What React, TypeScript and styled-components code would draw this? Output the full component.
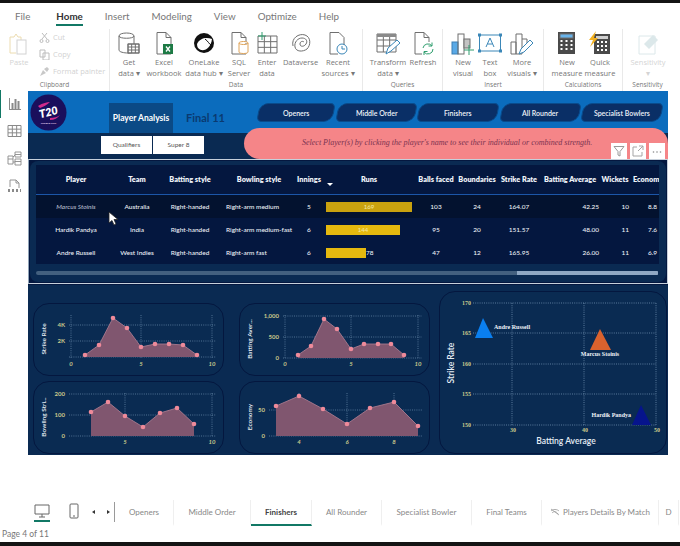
import { ReactNode } from "react";
import styled, { createGlobalStyle } from "styled-components";

// STYLE
const GlobalStyle = createGlobalStyle`
  html, body {
    margin: 0;
    padding: 0;
    background: #fff;
  }
  * {
    box-sizing: border-box;
  }
`;

const Page = styled.div`
  position: relative;
  display: flex;
  flex-direction: column;
  width: 680px;
  height: 546px;
  overflow: hidden;
  background: #fff;
  font-family: "Open Sans", "Liberation Sans", sans-serif;
`;

const BlackBar = styled.div<{ $h: number }>`
  flex: none;
  height: ${(p) => p.$h}px;
  background: #141414;
`;

const Ribbon = styled.div`
  flex: none;
  height: 87px;
  display: flex;
  flex-direction: column;
`;

const MenuBar = styled.div`
  flex: none;
  height: 25px;
  display: flex;
  align-items: center;
  padding-left: 15px;
  gap: 22px;
  font-family: "Lato", sans-serif;
  font-size: 9.8px;
`;

const MenuItem = styled.div<{ $active?: boolean }>`
  height: 22px;
  line-height: 24px;
  margin-top: -1px;
  color: ${(p) => (p.$active ? "#333" : "#777")};
  font-weight: ${(p) => (p.$active ? 700 : 400)};
  border-bottom: 2px solid ${(p) => (p.$active ? "#117865" : "transparent")};
  margin-left: ${(p) => (p.$active ? 4 : 0)}px;
`;

const Groups = styled.div`
  flex: 1;
  display: flex;
  padding-top: 1px;
`;

const Group = styled.div<{ $w: number; $last?: boolean }>`
  flex: none;
  width: ${(p) => p.$w}px;
  display: flex;
  flex-direction: column;
  border-right: 1px solid ${(p) => (p.$last ? "transparent" : "#e9e9e9")};
  margin-bottom: 1px;
`;

const GroupBody = styled.div<{ $pad?: number }>`
  flex: 1;
  display: flex;
  padding-left: ${(p) => p.$pad ?? 0}px;
`;

const GroupLabel = styled.div`
  flex: none;
  height: 12px;
  line-height: 12px;
  text-align: center;
  font-size: 6.5px;
  color: #777;
`;

const RibbonBtn = styled.div<{ $w: number; $off?: boolean }>`
  flex: none;
  width: ${(p) => p.$w}px;
  display: flex;
  flex-direction: column;
  align-items: center;
  font-size: 7.5px;
  line-height: 11px;
  white-space: nowrap;
  color: ${(p) => (p.$off ? "#d4d4d4" : "#777")};
`;

const IconSlot = styled.div`
  flex: none;
  height: 27px;
  margin-bottom: 1px;
  display: flex;
  align-items: center;
  justify-content: center;
`;

const ClipList = styled.div`
  display: flex;
  flex-direction: column;
  gap: 3px;
  padding: 1px 0 0 4px;
`;

const ClipRow = styled.div`
  display: flex;
  align-items: center;
  gap: 3px;
  height: 14px;
  font-size: 7.5px;
  color: #d2d2d2;
  white-space: nowrap;
`;

const Workspace = styled.div`
  flex: none;
  height: 410px;
  display: flex;
  padding-top: 1px;
`;

const Rail = styled.div`
  flex: none;
  width: 28px;
  display: flex;
  flex-direction: column;
  align-items: center;
  margin-top: -1px;
`;

const RailItem = styled.div<{ $active?: boolean }>`
  position: relative;
  width: 100%;
  height: 27.5px;
  display: flex;
  align-items: center;
  justify-content: center;
  border-left: 1px solid ${(p) => (p.$active ? "#117865" : "transparent")};
`;

const Canvas = styled.div`
  position: relative;
  flex: none;
  width: 640px;
  height: 364px;
  display: flex;
  flex-direction: column;
  background: #0a2a52;
`;

const Header = styled.div`
  flex: none;
  height: 42px;
  display: flex;
  background: #0b6cbd;
`;

const LogoBox = styled.div`
  flex: none;
  width: 81px;
  padding: 3px 0 0 2px;
`;

const PageTab = styled.div`
  flex: none;
  align-self: flex-end;
  width: 64px;
  height: 30px;
  background: #0b4a86;
  color: #fff;
  font-family: "Lato", sans-serif;
  font-size: 8.5px;
  font-weight: 700;
  text-align: center;
  line-height: 31px;
  white-space: nowrap;
`;

const FinalTab = styled.div`
  flex: none;
  width: 85px;
  padding: 20px 0 0 13px;
  color: #0a3a70;
  font-family: "Lato", sans-serif;
  font-size: 11px;
  font-weight: 700;
  white-space: nowrap;
`;

const NavRow = styled.div`
  flex: 1;
  display: flex;
  gap: 2.5px;
  padding: 12px 0 0 0;
  height: 31px;
`;

const NavButton = styled.div<{ $w: number }>`
  flex: none;
  width: ${(p) => p.$w}px;
  height: 19px;
  background: #0a2f66;
  border: 1px solid #0a4b8b;
  border-radius: 9px 5px 9px 5px;
  transform: skewX(-10deg);
  display: flex;
  align-items: center;
  justify-content: center;
  color: #eef3f8;
  font-family: "Lato", sans-serif;
  font-size: 7px;
  font-weight: 600;
  white-space: nowrap;

  span {
    transform: skewX(10deg);
  }
`;

const SubBar = styled.div`
  flex: none;
  height: 26px;
  display: flex;
  gap: 1px;
  padding: 3px 0 0 73px;
  background: #0a2a52;
`;

const Slicer = styled.div`
  flex: none;
  width: 51px;
  height: 18px;
  background: #fff;
  color: #555;
  font-family: "Lato", sans-serif;
  font-size: 6.5px;
  text-align: center;
  line-height: 18px;
`;

const Banner = styled.div`
  position: absolute;
  left: 216px;
  top: 37px;
  width: 424px;
  height: 31px;
  padding: 0 40px 2px 58px;
  display: flex;
  align-items: center;
  background: #f58588;
  border-radius: 16px 16px 0 16px;
  color: #7a3350;
  font-family: "Liberation Serif", serif;
  font-style: italic;
  font-size: 8px;
  white-space: nowrap;
`;

const VisualTools = styled.div`
  position: absolute;
  left: 583px;
  top: 52px;
  display: flex;
  gap: 3px;
  z-index: 2;
`;

const ToolButton = styled.div`
  width: 16px;
  height: 16px;
  background: #fff;
  display: flex;
  align-items: center;
  justify-content: center;
`;

const TablePanel = styled.div`
  flex: none;
  height: 125px;
  border: 1px solid #c6d0db;
  border-left-color: #8fa3b8;
  padding: 1px;
  background: #04173f;
`;

const TableCard = styled.div`
  height: 100%;
  background: #0a2a52;
  border-radius: 8px;
  padding: 4px 7px 0 6px;
  display: flex;
  flex-direction: column;
`;

const Table = styled.div`
  flex: none;
  height: 99px;
  background: #04173f;
  font-family: "Lato", "Open Sans", sans-serif;
  overflow: hidden;
`;

const Row = styled.div<{ $head?: boolean; $dim?: boolean }>`
  display: grid;
  grid-template-columns: 80px 42px 64px 74px 26px 94px 40px 42px 42px 60px 30px 28px;
  align-items: center;
  height: ${(p) => (p.$head ? 30 : 23)}px;
  color: #eef2f8;
  font-size: ${(p) => (p.$head ? 7.3 : 6.5)}px;
  font-weight: ${(p) => (p.$head ? 800 : 500)};
  border-bottom: ${(p) => (p.$head ? "1px solid #1c56a8" : "none")};
  background: ${(p) => (p.$dim ? "#03122f" : "transparent")};
`;

const Cell = styled.div<{ $align?: string; $pad?: number; $dim?: boolean }>`
  position: relative;
  text-align: ${(p) => p.$align ?? "center"};
  padding-left: ${(p) => p.$pad ?? 0}px;
  white-space: nowrap;
  font-style: ${(p) => (p.$dim ? "italic" : "normal")};
  color: ${(p) => (p.$dim ? "#b4bccb" : "inherit")};
`;

const NumCell = styled(Cell)`
  padding-right: 1px;
  text-align: right;
`;

const SortCaret = styled.div`
  position: absolute;
  left: 5px;
  top: 8px;
  width: 0;
  height: 0;
  border-left: 3px solid transparent;
  border-right: 3px solid transparent;
  border-top: 3px solid #fff;
`;

const RunBar = styled.div<{ $color: string }>`
  height: 10px;
  margin-left: 4px;
  display: flex;
  align-items: center;
  justify-content: center;
  background: ${(p) => p.$color};
  color: #f3e7a0;
  font-size: 6px;
`;

const RunOutside = styled.span`
  position: absolute;
  left: 44px;
  top: 0;
  line-height: 9px;
`;

const ScrollTrack = styled.div`
  flex: none;
  margin-top: 7px;
  height: 4px;
  display: flex;
  border-radius: 2px;
  overflow: hidden;
`;

const ScrollPart = styled.div<{ $w: number; $color: string }>`
  flex: none;
  width: ${(p) => p.$w}px;
  background: ${(p) => p.$color};
`;

const ChartsArea = styled.div`
  flex: 1;
  display: flex;
  gap: 9px;
  padding: 6px 1px 2px 5px;
  border-top: 1px solid #04173f;
`;

const SmallCharts = styled.div`
  flex: none;
  align-self: flex-end;
  display: grid;
  grid-template-columns: 191px 191px;
  grid-template-rows: 73px 73px;
  column-gap: 15px;
  row-gap: 5px;
`;

const ChartCard = styled.div`
  border: 1.5px solid #04173f;
  border-radius: 16px;
  background: #0a2b52;
  overflow: hidden;

  svg {
    display: block;
    margin: -1.5px;
  }
`;

const BigCard = styled(ChartCard)`
  flex: none;
  width: 228px;
  height: 163px;
`;

const PageTabs = styled.div`
  flex: none;
  height: 27px;
  display: flex;
  align-items: stretch;
`;

const ViewTools = styled.div`
  flex: none;
  width: 115px;
  display: flex;
  align-items: center;
  border-right: 1px solid #9a9a9a;
  margin: 2px 0 5px;
  padding-left: 34px;
`;

const ViewTool = styled.div<{ $active?: boolean; $w: number; $gap: number }>`
  flex: none;
  width: ${(p) => p.$w}px;
  margin-right: ${(p) => p.$gap}px;
  height: 20px;
  display: flex;
  align-items: center;
  justify-content: center;
  border-bottom: 2px solid ${(p) => (p.$active ? "#117865" : "transparent")};
`;

const Pager = styled.div`
  flex: none;
  width: 18px;
  display: flex;
  justify-content: space-between;
`;

const Triangle = styled.div<{ $left?: boolean }>`
  width: 0;
  height: 0;
  border-top: 2.5px solid transparent;
  border-bottom: 2.5px solid transparent;
  ${(p) => (p.$left ? "border-right: 3px solid #333;" : "border-left: 3px solid #333;")}
`;

const PageTabItem = styled.div<{ $w: number; $active?: boolean }>`
  flex: none;
  width: ${(p) => p.$w}px;
  display: flex;
  align-items: center;
  justify-content: center;
  gap: 3px;
  font-family: "Lato", sans-serif;
  font-size: 8px;
  white-space: nowrap;
  overflow: hidden;
  color: ${(p) => (p.$active ? "#444" : "#888")};
  font-weight: ${(p) => (p.$active ? 700 : 400)};
  border-right: 1px solid #efefef;
  border-bottom: 2px solid ${(p) => (p.$active ? "#117865" : "transparent")};
  margin-bottom: 1px;
`;

const StatusBar = styled.div`
  flex: none;
  height: 15px;
  padding-left: 2px;
  font-family: "Lato", sans-serif;
  font-size: 8.5px;
  line-height: 15px;
  color: #777;
`;

const Cursor = styled.svg`
  position: absolute;
  left: 80px;
  top: 120px;
  z-index: 3;
`;

// ICONS
const Svg = ({ children, w = 24, h = 24 }: { children: ReactNode; w?: number; h?: number }) => (
  <svg width={w} height={h} viewBox={`0 0 ${w} ${h}`} fill="none" stroke="#6f6f6f" strokeWidth="1">
    {children}
  </svg>
);

const doc = "M5 1.5h9l5 5V23H5z M14 1.5v5h5";

const GridLines = ({ x, y, w, h, cols = 3, rows = 3 }: { x: number; y: number; w: number; h: number; cols?: number; rows?: number }) => {
  const lines: string[] = [];
  for (let i = 0; i <= cols; i++) lines.push(`M${x + (w * i) / cols} ${y}v${h}`);
  for (let i = 0; i <= rows; i++) lines.push(`M${x} ${y + (h * i) / rows}h${w}`);
  return <path d={lines.join(" ")} />;
};

const PasteIcon = () => (
  <Svg>
    <path d="M3 6h4l2-3 2 3h3v3M3 6v16h6" stroke="#ecdcb0" />
    <rect x="10" y="9" width="9" height="14" stroke="#d2d2d2" />
  </Svg>
);
const GetDataIcon = () => (
  <Svg>
    <path d="M2 5c0-4 15-4 15 0v15c0 1-2 2-6 2s-9-1-9-3z M2 5c0 3 15 3 15 0" />
    <rect x="11" y="13" width="11" height="9" fill="#fff" />
    <GridLines x={11} y={13} w={11} h={9} />
  </Svg>
);
const ExcelIcon = () => (
  <Svg>
    <path d={doc} />
    <rect x="11" y="13" width="10" height="10" fill="#1d7a45" stroke="none" />
    <path d="M14 15.5l4 5M18 15.5l-4 5" stroke="#fff" strokeWidth="1.3" />
  </Svg>
);
const OneLakeIcon = () => (
  <Svg>
    <circle cx="12" cy="12" r="10" fill="#111" stroke="none" />
    <path d="M5 13c3-6 9-7 15-5-1 8-6 12-11 11-3-1-4-3-4-6z" fill="#fff" stroke="none" />
    <path d="M13 8c3 2 4 5 6 6" stroke="#111" />
  </Svg>
);
const SqlIcon = () => (
  <Svg>
    <path d={doc} />
    <path d="M12 12c0-2 9-2 9 0v9c0 2-9 2-9 0z M12 12c0 2 9 2 9 0" stroke="#e0a458" fill="#fff" />
  </Svg>
);
const EnterDataIcon = () => (
  <Svg>
    <GridLines x={3} y={5} w={19} h={17} cols={3} rows={3} />
    <path d="M7 1v8M3 5h8" stroke="#2f9e6e" />
  </Svg>
);
const DataverseIcon = () => (
  <Svg>
    <path d="M4 15C2 7 10 2 16 4c6 2 6 10 2 14-4 3-11 3-12-2-1-5 3-9 7-9s6 3 4 6-6 3-6 0 3-3 4-2" />
  </Svg>
);
const RecentIcon = () => (
  <Svg>
    <path d="M4 1.5h9l5 5V14M4 1.5V23h8" />
    <circle cx="16" cy="18" r="5" stroke="#3b87b8" />
    <path d="M16 15v3h3" stroke="#3b87b8" />
  </Svg>
);
const TransformIcon = () => (
  <Svg>
    <GridLines x={1} y={3} w={19} h={18} cols={3} rows={3} />
    <path d="M1 3h19v3H1z" fill="#8a8a8a" stroke="none" />
    <path d="M10 23l2-6 9-8 3 3-9 8z" fill="#fff" stroke="#3b87b8" />
  </Svg>
);
const RefreshIcon = () => (
  <Svg>
    <path d="M4 1.5h9l5 5V11M4 1.5V23h7M13 1.5v5h5" />
    <path d="M12 17a5 5 0 0 1 9-2M22 18a5 5 0 0 1-9 3" stroke="#2f9e6e" />
    <path d="M21 11.5V15h-3.5M13 24v-3.5h3.5" stroke="#2f9e6e" />
  </Svg>
);
const NewVisualIcon = () => (
  <Svg>
    <rect x="1" y="11" width="6" height="12" fill="#59a9e6" stroke="#3a7fb5" />
    <rect x="7" y="3" width="6" height="20" />
    <rect x="13" y="8" width="6" height="9" fill="#c4c4c4" />
    <path d="M18 14v10M13 19h10" stroke="#2f9e6e" />
  </Svg>
);
const TextBoxIcon = () => (
  <Svg>
    <rect x="1.5" y="4" width="21" height="16" stroke="#3b87b8" />
    <path d="M8 16l4-9 4 9M9.5 13h5" stroke="#3b87b8" />
    <path d="M0 2.5h3v3H0zM21 2.5h3v3h-3zM0 18.5h3v3H0zM21 18.5h3v3h-3z" fill="#3b87b8" stroke="none" />
  </Svg>
);
const MoreVisualsIcon = () => (
  <Svg>
    <path d="M1 11h5v12H1zM6 3h6v20H6zM12 8h5v6" />
    <path d="M9 23l2-5 9-9 3 3-9 9z" fill="#fff" stroke="#3b87b8" />
  </Svg>
);
const MeasureIcon = () => (
  <Svg>
    <rect x="3" y="1" width="17" height="22" fill="#4a4a4a" stroke="none" />
    <rect x="5" y="3" width="13" height="4" fill="#68b3ea" />
    <path d="M5.5 10h2M10.5 10h2M15.5 10h2M5.5 14h2M10.5 14h2M15.5 14h2M5.5 18h2M10.5 18h2M15.5 18h2" stroke="#fff" strokeWidth="2" />
  </Svg>
);
const QuickMeasureIcon = () => (
  <Svg>
    <rect x="6" y="3" width="16" height="20" fill="#4a4a4a" stroke="none" />
    <rect x="8" y="5" width="12" height="3" fill="#cfcfcf" stroke="none" />
    <path d="M9 11h2M13 11h2M17 11h2M9 15h2M13 15h2M17 15h2M9 19h2M13 19h2M17 19h2" stroke="#fff" strokeWidth="2" />
    <path d="M8 0L1 9h4l-3 7 8-9H6z" fill="#f2b01e" stroke="none" />
  </Svg>
);
const SensitivityIcon = () => (
  <Svg>
    <path d="M3 5h16v18H3z" stroke="#dce8ea" />
    <path d="M8 13l9-9 5 5-9 9z" fill="#dce8ea" stroke="none" />
  </Svg>
);

const ReportIcon = () => (
  <svg width="14" height="14" viewBox="0 0 14 14" fill="#8a8a8a" stroke="none">
    <path d="M1 1h1v12H1zM1 12h12v1H1zM3.5 6h2v6h-2zM6.5 2h2v10h-2zM9.5 4h2v8h-2z" />
  </svg>
);
const DataIcon = () => (
  <svg width="15" height="14" viewBox="0 0 15 14" fill="none" stroke="#8a8a8a">
    <GridLines x={1} y={1.5} w={13} h={11} cols={3} rows={3} />
  </svg>
);
const ModelIcon = () => (
  <svg width="15" height="15" viewBox="0 0 15 15" fill="none" stroke="#8a8a8a" strokeWidth="0.9">
    <path d="M1 5h5v8H1zM8 1h6v5H8zM8 8h6v6H8zM1 8h5M8 3.5h6M8 10.5h6M6 6l2-2M6 11h2" />
  </svg>
);
const DaxIcon = () => (
  <svg width="15" height="15" viewBox="0 0 15 15" fill="none" stroke="#8a8a8a" strokeWidth="0.9">
    <path d="M3 8V1h6l3 3v5M9 1v3h3" />
    <path d="M1 10h2v3H1zM5 10h2v3H5zM9 10h2v3H9zM13 10h1v3h-1z" fill="#8a8a8a" stroke="none" />
  </svg>
);

// CHARTS
const TICK = "#c9c98c";
const GRID = "#6f8fb0";
const TXT = "Lato, sans-serif";

type AreaProps = {
  title: string;
  titleY?: number;
  pts: number[][];
  base: number;
  gridL: number;
  gridR: number;
  hLines: number[];
  vLines: number[];
  yTicks: { y: number; label: string }[];
  xTicks: { x: number; label: string }[];
};

function AreaChart(props: AreaProps) {
  const { title, pts, base, gridL, gridR, hLines, vLines, yTicks, xTicks } = props;
  const line = pts.map((p) => p.join(",")).join(" ");
  const area = `${pts[0][0]},${base} ${line} ${pts[pts.length - 1][0]},${base}`;
  return (
    <svg width="191" height="73" viewBox="0 0 191 73">
      {hLines.map((y) => (
        <line key={y} x1={gridL} x2={gridR} y1={y} y2={y} stroke={GRID} strokeWidth="0.7" strokeDasharray="1 1.2" />
      ))}
      {vLines.map((x) => (
        <line key={x} x1={x} x2={x} y1={12} y2={base + 1} stroke={GRID} strokeWidth="0.7" strokeDasharray="1 1.2" />
      ))}
      <polygon points={area} fill="#80566f" />
      <polyline points={line} fill="none" stroke="#a8798d" strokeWidth="0.9" />
      {pts.map((p, i) => (
        <circle key={i} cx={p[0]} cy={p[1]} r="2.3" fill="#ee8a9a" />
      ))}
      {yTicks.map((t) => (
        <text key={t.label} x={gridL - 4} y={t.y + 2} textAnchor="end" fontSize="6" fontWeight="700" fontFamily={TXT} fill={TICK}>
          {t.label}
        </text>
      ))}
      {xTicks.map((t) => (
        <text key={t.label} x={t.x} y={63} textAnchor="middle" fontSize="6" fontWeight="700" fontStyle="italic" fontFamily={TXT} fill={TICK}>
          {t.label}
        </text>
      ))}
      <text transform={`translate(13 ${props.titleY ?? 36}) rotate(-90)`} textAnchor="middle" fontSize="6.5" fontWeight="600" fontFamily={TXT} fill="#eef2f8">
        {title}
      </text>
    </svg>
  );
}

function ScatterChart() {
  const hs = [12, 42, 73, 103, 134];
  const vs = [73, 145, 217];
  const serif = "'Liberation Serif', serif";
  return (
    <svg width="228" height="163" viewBox="0 0 228 163">
      {hs.map((y) => (
        <line key={y} x1={34} x2={217} y1={y} y2={y} stroke={GRID} strokeWidth="0.8" strokeDasharray="1 1.2" />
      ))}
      {vs.map((x) => (
        <line key={x} x1={x} x2={x} y1={12} y2={134} stroke={GRID} strokeWidth="0.8" strokeDasharray="1 1.2" />
      ))}
      {["170", "165", "160", "155", "150"].map((l, i) => (
        <text key={l} x={32} y={hs[i] + 2} textAnchor="end" fontSize="6" fontWeight="700" fontFamily={serif} fill={TICK}>
          {l}
        </text>
      ))}
      {["30", "40", "50"].map((l, i) => (
        <text key={l} x={vs[i] + 1} y={141} textAnchor="middle" fontSize="6" fontWeight="700" fontFamily={serif} fill={TICK}>
          {l}
        </text>
      ))}
      <polygon points="44,27 36,47 54,47" fill="#0a7ff0" />
      <polygon points="161,38 151,59 172,59" fill="#d9622e" />
      <polygon points="202,114 193,134 212,134" fill="#06148c" />
      <text x={55} y={38} fontSize="6" fontWeight="700" fontFamily={serif} fill="#eef2f8">Andre Russell</text>
      <text x={161} y={65} textAnchor="middle" fontSize="6" fontWeight="700" fontFamily={serif} fill="#eef2f8">Marcus Stoinis</text>
      <text x={192} y={126} textAnchor="end" fontSize="6" fontWeight="700" fontFamily={serif} fill="#eef2f8">Hardik Pandya</text>
      <text x={127} y={153} textAnchor="middle" fontSize="8.5" fontWeight="600" fontFamily={TXT} fill="#e6edf5">Batting Average</text>
      <text transform="translate(15 72) rotate(-90)" textAnchor="middle" fontSize="8.5" fontWeight="600" fontFamily={TXT} fill="#e6edf5">Strike Rate</text>
    </svg>
  );
}

const LogoMark = () => (
  <svg width="37" height="37" viewBox="0 0 37 37">
    <circle cx="18.5" cy="18.5" r="18" fill="#1a0f5c" />
    <path d="M8 12c5-3 9-4 12-4-3 3-7 5-10 6z" fill="#d22a8c" />
    <path d="M20 24c4 0 8-1 10-3-2 3-6 5-10 5z" fill="#d22a8c" />
    <text transform="rotate(-14 18.5 18.5)" x="18.5" y="22" textAnchor="middle" fontSize="11" fontWeight="800" fontStyle="italic" fontFamily="Lato, sans-serif" fill="#fff">
      T20
    </text>
    <text x="18.5" y="29.5" textAnchor="middle" fontSize="2.6" fontWeight="700" fontFamily="Lato, sans-serif" fill="#e9d7ef">
      WORLD CUP
    </text>
  </svg>
);

// DATA
const dataButtons: { w: number; icon: ReactNode; a: string; b: string }[] = [
  { w: 36, icon: <GetDataIcon />, a: "Get", b: "data ▾" },
  { w: 34, icon: <ExcelIcon />, a: "Excel", b: "workbook" },
  { w: 46, icon: <OneLakeIcon />, a: "OneLake", b: "data hub ▾" },
  { w: 24, icon: <SqlIcon />, a: "SQL", b: "Server" },
  { w: 32, icon: <EnterDataIcon />, a: "Enter", b: "data" },
  { w: 35, icon: <DataverseIcon />, a: "Dataverse", b: "" },
  { w: 40, icon: <RecentIcon />, a: "Recent", b: "sources ▾" },
];

const players = [
  { name: "Marcus Stoinis", team: "Australia", bowl: "Right-arm medium", inn: "5", runs: "169", bar: 86, color: "#c9a20f", balls: "103", bnd: "24", sr: "164.07", avg: "42.25", w: "10", eco: "8.8" },
  { name: "Hardik Pandya", team: "India", bowl: "Right-arm medium-fast", inn: "6", runs: "144", bar: 74, color: "#e5b90f", balls: "95", bnd: "20", sr: "151.57", avg: "48.00", w: "11", eco: "7.6" },
  { name: "Andre Russell", team: "West Indies", bowl: "Right-arm fast", inn: "6", runs: "78", bar: 40, color: "#e5b90f", balls: "47", bnd: "12", sr: "165.95", avg: "26.00", w: "11", eco: "6.9" },
];

const navs = [
  { label: "Openers", w: 76 },
  { label: "Middle Order", w: 79 },
  { label: "Finishers", w: 80 },
  { label: "All Rounder", w: 79 },
  { label: "Specialist Bowlers", w: 80 },
];

const tabs = [
  { label: "Openers", w: 59 },
  { label: "Middle Order", w: 77 },
  { label: "Finishers", w: 61, active: true },
  { label: "All Rounder", w: 70 },
  { label: "Specialist Bowler", w: 90 },
  { label: "Final Teams", w: 70 },
];

function App() {
  return (
    <Page>
      <GlobalStyle />
      <BlackBar $h={3} />
      <Ribbon>
        <MenuBar>
          <MenuItem>File</MenuItem>
          <MenuItem $active>Home</MenuItem>
          <MenuItem>Insert</MenuItem>
          <MenuItem>Modeling</MenuItem>
          <MenuItem>View</MenuItem>
          <MenuItem>Optimize</MenuItem>
          <MenuItem>Help</MenuItem>
        </MenuBar>
        <Groups>
          <Group $w={110}>
            <GroupBody $pad={3}>
              <RibbonBtn $w={32} $off>
                <IconSlot><PasteIcon /></IconSlot>
                Paste
              </RibbonBtn>
              <ClipList>
                <ClipRow>
                  <svg width="11" height="11" viewBox="0 0 11 11" fill="none" stroke="#bdbdbd"><path d="M3 1l5 6M8 1L3 7" /><circle cx="2.5" cy="9" r="1.5" /><circle cx="8.5" cy="9" r="1.5" /></svg>
                  Cut
                </ClipRow>
                <ClipRow>
                  <svg width="11" height="11" viewBox="0 0 11 11" fill="none" stroke="#bdbdbd"><path d="M1 1h5v7H1zM4 4h6v7H4z" /></svg>
                  Copy
                </ClipRow>
                <ClipRow>
                  <svg width="11" height="11" viewBox="0 0 11 11" fill="#c8c8c8"><path d="M1 10l3-6 3 3zM5 3l3-2 2 2-2 3z" /></svg>
                  Format painter
                </ClipRow>
              </ClipList>
            </GroupBody>
            <GroupLabel>Clipboard</GroupLabel>
          </Group>
          <Group $w={253}>
            <GroupBody $pad={1}>
              {dataButtons.map((b) => (
                <RibbonBtn key={b.a} $w={b.w}>
                  <IconSlot>{b.icon}</IconSlot>
                  <span>{b.a}</span>
                  <span>{b.b}</span>
                </RibbonBtn>
              ))}
            </GroupBody>
            <GroupLabel>Data</GroupLabel>
          </Group>
          <Group $w={80}>
            <GroupBody $pad={5}>
              <RibbonBtn $w={40}>
                <IconSlot><TransformIcon /></IconSlot>
                <span>Transform</span>
                <span>data ▾</span>
              </RibbonBtn>
              <RibbonBtn $w={30}>
                <IconSlot><RefreshIcon /></IconSlot>
                <span>Refresh</span>
              </RibbonBtn>
            </GroupBody>
            <GroupLabel>Queries</GroupLabel>
          </Group>
          <Group $w={101}>
            <GroupBody $pad={6}>
              <RibbonBtn $w={28}>
                <IconSlot><NewVisualIcon /></IconSlot>
                <span>New</span>
                <span>visual</span>
              </RibbonBtn>
              <RibbonBtn $w={26}>
                <IconSlot><TextBoxIcon /></IconSlot>
                <span>Text</span>
                <span>box</span>
              </RibbonBtn>
              <RibbonBtn $w={38}>
                <IconSlot><MoreVisualsIcon /></IconSlot>
                <span>More</span>
                <span>visuals ▾</span>
              </RibbonBtn>
            </GroupBody>
            <GroupLabel>Insert</GroupLabel>
          </Group>
          <Group $w={79}>
            <GroupBody $pad={4}>
              <RibbonBtn $w={38}>
                <IconSlot><MeasureIcon /></IconSlot>
                <span>New</span>
                <span>measure</span>
              </RibbonBtn>
              <RibbonBtn $w={28}>
                <IconSlot><QuickMeasureIcon /></IconSlot>
                <span>Quick</span>
                <span>measure</span>
              </RibbonBtn>
            </GroupBody>
            <GroupLabel>Calculations</GroupLabel>
          </Group>
          <Group $w={50} $last>
            <GroupBody>
              <RibbonBtn $w={50} $off>
                <IconSlot><SensitivityIcon /></IconSlot>
                <span>Sensitivity</span>
                <span>▾</span>
              </RibbonBtn>
            </GroupBody>
            <GroupLabel>Sensitivity</GroupLabel>
          </Group>
        </Groups>
      </Ribbon>
      <Workspace>
        <Rail>
          <RailItem $active><ReportIcon /></RailItem>
          <RailItem><DataIcon /></RailItem>
          <RailItem><ModelIcon /></RailItem>
          <RailItem><DaxIcon /></RailItem>
        </Rail>
        <Canvas>
          <Header>
            <LogoBox><LogoMark /></LogoBox>
            <PageTab>Player Analysis</PageTab>
            <FinalTab>Final 11</FinalTab>
            <NavRow>
              {navs.map((n) => (
                <NavButton key={n.label} $w={n.w}>
                  <span>{n.label}</span>
                </NavButton>
              ))}
            </NavRow>
          </Header>
          <SubBar>
            <Slicer>Qualifiers</Slicer>
            <Slicer>Super 8</Slicer>
          </SubBar>
          <Banner>Select Player(s) by clicking the player's name to see their individual or combined strength.</Banner>
          <VisualTools>
            <ToolButton>
              <svg width="12" height="12" viewBox="0 0 12 12" fill="none" stroke="#9a9a9a"><path d="M1 1.5h10L7 6.5V11L5 10V6.5z" /></svg>
            </ToolButton>
            <ToolButton>
              <svg width="12" height="12" viewBox="0 0 12 12" fill="none" stroke="#a5a5a5"><path d="M5 2H1v9h9V7M7 1h4v4M11 1L6 6" /></svg>
            </ToolButton>
            <ToolButton>
              <svg width="12" height="12" viewBox="0 0 12 12" fill="#8a8a8a"><circle cx="2.5" cy="7" r="0.8" /><circle cx="6" cy="7" r="0.8" /><circle cx="9.5" cy="7" r="0.8" /></svg>
            </ToolButton>
          </VisualTools>
          <TablePanel>
            <TableCard>
              <Table>
                <Row $head>
                  <Cell>Player</Cell>
                  <Cell>Team</Cell>
                  <Cell>Batting style</Cell>
                  <Cell>Bowling style</Cell>
                  <Cell>Innings</Cell>
                  <Cell>
                    Runs
                    <SortCaret />
                  </Cell>
                  <Cell>Balls faced</Cell>
                  <Cell>Boundaries</Cell>
                  <Cell>Strike Rate</Cell>
                  <Cell>Batting Average</Cell>
                  <Cell>Wickets</Cell>
                  <Cell $align="left" $pad={3}>Econom</Cell>
                </Row>
                {players.map((p, i) => (
                  <Row key={p.name} $dim={i === 0}>
                    <Cell $dim={i === 0}>{p.name}</Cell>
                    <Cell>{p.team}</Cell>
                    <Cell>Right-handed</Cell>
                    <Cell $align="left" $pad={4}>{p.bowl}</Cell>
                    <Cell>{p.inn}</Cell>
                    <Cell>
                      <RunBar $color={p.color} style={{ width: p.bar }}>
                        {p.bar > 50 ? p.runs : null}
                      </RunBar>
                      {p.bar <= 50 ? <RunOutside>{p.runs}</RunOutside> : null}
                    </Cell>
                    <Cell>{p.balls}</Cell>
                    <Cell>{p.bnd}</Cell>
                    <Cell>{p.sr}</Cell>
                    <NumCell>{p.avg}</NumCell>
                    <NumCell>{p.w}</NumCell>
                    <NumCell>{p.eco}</NumCell>
                  </Row>
                ))}
              </Table>
              <ScrollTrack>
                <ScrollPart $w={481} $color="#43607f" />
                <ScrollPart $w={141} $color="#8fa8c4" />
              </ScrollTrack>
            </TableCard>
          </TablePanel>
          <ChartsArea>
            <SmallCharts>
              <ChartCard>
                <AreaChart
                  title="Strike Rate"
                  pts={[[52, 52], [66, 42], [80, 15], [94, 25], [108, 44], [122, 41], [136, 41], [150, 42], [164, 52]]}
                  base={54}
                  gridL={36}
                  gridR={183}
                  hLines={[22, 38, 54]}
                  vLines={[38, 108, 179]}
                  yTicks={[{ y: 22, label: "4K" }, { y: 38, label: "2K" }]}
                  xTicks={[{ x: 38, label: "0" }, { x: 108, label: "5" }, { x: 179, label: "10" }]}
                />
              </ChartCard>
              <ChartCard>
                <AreaChart
                  title="Batting Aver..."
                  pts={[[59, 52], [72, 43], [85, 16], [98, 26], [112, 46], [125, 41], [139, 41], [152, 41], [165, 52]]}
                  base={55}
                  gridL={44}
                  gridR={183}
                  hLines={[13, 34, 55]}
                  vLines={[46, 112, 179]}
                  yTicks={[{ y: 13, label: "1,000" }, { y: 34, label: "500" }, { y: 55, label: "0" }]}
                  xTicks={[{ x: 46, label: "0" }, { x: 112, label: "5" }, { x: 179, label: "10" }]}
                />
              </ChartCard>
              <ChartCard>
                <AreaChart
                  title="Bowling Stri..."
                  pts={[[58, 31], [75, 21], [92, 35], [110, 46], [127, 32], [144, 27], [161, 43]]}
                  base={55}
                  gridL={36}
                  gridR={183}
                  hLines={[13, 34, 55]}
                  vLines={[92, 179]}
                  yTicks={[{ y: 13, label: "200" }, { y: 34, label: "100" }, { y: 55, label: "0" }]}
                  xTicks={[{ x: 92, label: "5" }, { x: 179, label: "10" }]}
                />
              </ChartCard>
              <ChartCard>
                <AreaChart
                  title="Economy"
                  pts={[[37, 25], [60, 15], [84, 28], [108, 43], [131, 27], [155, 21], [179, 45]]}
                  base={55}
                  gridL={30}
                  gridR={183}
                  hLines={[29, 55]}
                  vLines={[60, 108, 155]}
                  yTicks={[{ y: 29, label: "50" }, { y: 55, label: "0" }]}
                  xTicks={[{ x: 60, label: "4" }, { x: 108, label: "6" }, { x: 155, label: "8" }]}
                />
              </ChartCard>
            </SmallCharts>
            <BigCard>
              <ScatterChart />
            </BigCard>
          </ChartsArea>
          <Cursor width="12" height="15" viewBox="0 0 12 15">
            <path d="M1 1v11l3-2.5 2 4.5 2-1-2-4.5h4z" fill="#fff" stroke="#222" strokeWidth="0.8" />
          </Cursor>
        </Canvas>
      </Workspace>
      <PageTabs>
        <ViewTools>
          <ViewTool $w={16} $gap={19} $active>
            <svg width="16" height="16" viewBox="0 0 16 16" fill="none" stroke="#666"><path d="M1 2h14v9H1zM8 11v3M5 14h6" /></svg>
          </ViewTool>
          <ViewTool $w={10} $gap={13}>
            <svg width="10" height="16" viewBox="0 0 10 16" fill="none" stroke="#666"><rect x="1" y="1" width="8" height="14" rx="1" /><path d="M4 13h2" /></svg>
          </ViewTool>
          <Pager>
            <Triangle $left />
            <Triangle />
          </Pager>
        </ViewTools>
        {tabs.map((t) => (
          <PageTabItem key={t.label} $w={t.w} $active={t.active}>
            {t.label}
          </PageTabItem>
        ))}
        <PageTabItem $w={117}>
          <svg width="10" height="8" viewBox="0 0 10 8" fill="none" stroke="#999" strokeWidth="0.8"><path d="M1 3c2-2 6-2 8 0M2 5c2-2 4-2 6 1M1 1l8 6" /></svg>
          Players Details By Match
        </PageTabItem>
        <PageTabItem $w={20}>D</PageTabItem>
      </PageTabs>
      <StatusBar>Page 4 of 11</StatusBar>
      <BlackBar $h={4} />
    </Page>
  );
}

export default App;
